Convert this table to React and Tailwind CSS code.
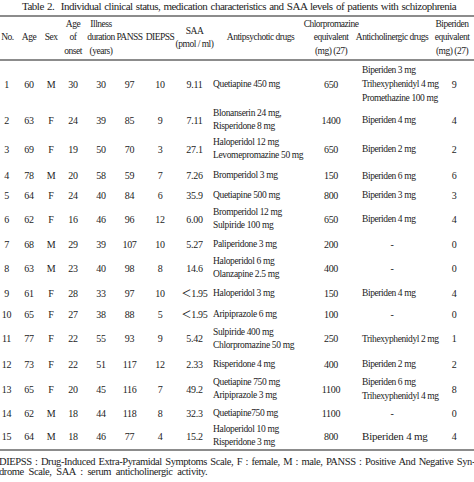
import React from "react";

const ROWS = [
  { no: "1", age: "60", sex: "M", onset: "30", dur: "30", panss: "97", diepss: "10", saa: "9.11", drugs: ["Quetiapine 450 mg"], cpz: "650", anti: ["Biperiden 3 mg", "Trihexyphenidyl 4 mg", "Promethazine 100 mg"], bip: "9", h: "h-[47px]" },
  { no: "2", age: "63", sex: "F", onset: "24", dur: "39", panss: "85", diepss: "9", saa: "7.11", drugs: ["Blonanserin 24 mg,", "Risperidone 8 mg"], cpz: "1400", anti: ["Biperiden 4 mg"], bip: "4", h: "h-[26px]" },
  { no: "3", age: "69", sex: "F", onset: "19", dur: "50", panss: "70", diepss: "3", saa: "27.1", drugs: ["Haloperidol 12 mg", "Levomepromazine 50 mg"], cpz: "650", anti: ["Biperiden 2 mg"], bip: "2", h: "h-[32px]" },
  { no: "4", age: "78", sex: "M", onset: "20", dur: "58", panss: "59", diepss: "7", saa: "7.26", drugs: ["Bromperidol 3 mg"], cpz: "150", anti: ["Biperiden 6 mg"], bip: "6", h: "h-[21px]" },
  { no: "5", age: "64", sex: "F", onset: "24", dur: "40", panss: "84", diepss: "6", saa: "35.9", drugs: ["Quetiapine 500 mg"], cpz: "800", anti: ["Biperiden 3 mg"], bip: "3", h: "h-[18px]" },
  { no: "6", age: "62", sex: "F", onset: "16", dur: "46", panss: "96", diepss: "12", saa: "6.00", drugs: ["Bromperidol 12 mg", "Sulpiride 100 mg"], cpz: "650", anti: ["Biperiden 4 mg"], bip: "4", h: "h-[30px]" },
  { no: "7", age: "68", sex: "M", onset: "29", dur: "39", panss: "107", diepss: "10", saa: "5.27", drugs: ["Paliperidone 3 mg"], cpz: "200", anti: null, bip: "0", h: "h-[20px]" },
  { no: "8", age: "63", sex: "M", onset: "23", dur: "40", panss: "98", diepss: "8", saa: "14.6", drugs: ["Haloperidol 6 mg", "Olanzapine 2.5 mg"], cpz: "400", anti: null, bip: "0", h: "h-[28px]" },
  { no: "9", age: "61", sex: "F", onset: "28", dur: "33", panss: "97", diepss: "10", saa: "＜1.95", drugs: ["Haloperidol 3 mg"], cpz: "150", anti: ["Biperiden 4 mg"], bip: "4", h: "h-[22px]" },
  { no: "10", age: "65", sex: "F", onset: "27", dur: "38", panss: "88", diepss: "5", saa: "＜1.95", drugs: ["Aripiprazole 6 mg"], cpz: "100", anti: null, bip: "0", h: "h-[20px]" },
  { no: "11", age: "77", sex: "F", onset: "22", dur: "55", panss: "93", diepss: "9", saa: "5.42", drugs: ["Sulpiride 400 mg", "Chlorpromazine 50 mg"], cpz: "250", anti: ["Trihexyphenidyl 2 mg"], bip: "1", h: "h-[29px]" },
  { no: "12", age: "73", sex: "F", onset: "22", dur: "51", panss: "117", diepss: "12", saa: "2.33", drugs: ["Risperidone 4 mg"], cpz: "400", anti: ["Biperiden 2 mg"], bip: "2", h: "h-[22px]" },
  { no: "13", age: "65", sex: "F", onset: "20", dur: "45", panss: "116", diepss: "7", saa: "49.2", drugs: ["Quetiapine 750 mg", "Aripiprazole 3 mg"], cpz: "1100", anti: ["Biperiden 6 mg", "Trihexyphenidyl 4 mg"], bip: "8", h: "h-[28px]" },
  { no: "14", age: "62", sex: "M", onset: "18", dur: "44", panss: "118", diepss: "8", saa: "32.3", drugs: ["Quetiapine750 mg"], cpz: "1100", anti: null, bip: "0", h: "h-[20px]" },
  { no: "15", age: "64", sex: "M", onset: "18", dur: "46", panss: "77", diepss: "4", saa: "15.2", drugs: ["Haloperidol 10 mg", "Risperidone 3 mg"], cpz: "800", anti: ["Biperiden 4 mg"], bip: "4", h: "h-[25px]", bigAnti: true },
];

const HEAD = [
  ["No."], ["Age"], ["Sex"], ["Age", "of", "onset"], ["Illness", "duration", "(years)"],
  ["PANSS"], ["DIEPSS"], ["SAA", "(pmol / ml)"], ["Antipsychotic drugs"],
  ["Chlorpromazine", "equivalent", "(mg)  (27)"], ["Anticholinergic drugs"],
  ["Biperiden", "equivalent", "(mg)  (27)"],
];

function Lines({ items, cls }) {
  return (
    <div className={cls}>
      {items.map((t) => <div key={t} className="whitespace-nowrap">{t}</div>)}
    </div>
  );
}

export default function App() {
  return (
    <div className="w-[474px] h-[482px] overflow-hidden bg-white text-[#1c1c1c] font-['Liberation_Serif','Noto_Sans_CJK_KR',serif]">
      <div className="h-[15px] pl-[22px] text-[11px] leading-[12px] whitespace-nowrap tracking-[-0.5px] [word-spacing:1px]">
        Table 2.&nbsp; Individual clinical status, medication characteristics and SAA levels of patients with schizophrenia
      </div>

      <table className="w-[474px] table-fixed border-collapse">
        <colgroup>
          <col className="w-[15px]" />
          <col className="w-[28px]" />
          <col className="w-[16px]" />
          <col className="w-[28px]" />
          <col className="w-[28px]" />
          <col className="w-[29px]" />
          <col className="w-[32px]" />
          <col className="w-[37px]" />
          <col className="w-[95px]" />
          <col className="w-[46px]" />
          <col className="w-[76px]" />
          <col className="w-[44px]" />
        </colgroup>
        <thead>
          <tr className="h-[44px] border-t-2 border-b-2 border-[#8c8c8c]">
            {HEAD.map((h, i) => (
              <th key={i} className="p-0 font-normal text-center align-middle text-[9.5px] leading-[13.5px] tracking-[-0.5px]">
                <Lines items={h} cls="flex flex-col items-center" />
              </th>
            ))}
          </tr>
        </thead>
        <tbody className="text-[10px] tracking-[-0.3px]">
          {ROWS.map((r) => (
            <tr key={r.no} className={r.h}>
              <td className="p-0 pr-0.5 text-center align-middle">{r.no}</td>
              <td className="p-0 text-center align-middle">{r.age}</td>
              <td className="p-0 text-center align-middle">{r.sex}</td>
              <td className="p-0 text-center align-middle">{r.onset}</td>
              <td className="p-0 text-center align-middle">{r.dur}</td>
              <td className="p-0 text-center align-middle">{r.panss}</td>
              <td className="p-0 text-center align-middle">{r.diepss}</td>
              <td className="p-0 text-center align-middle whitespace-nowrap">{r.saa}</td>
              <td className="p-0 align-middle">
                <Lines items={r.drugs} cls="text-[9.5px] leading-[13px] tracking-[-0.35px]" />
              </td>
              <td className="p-0 text-center align-middle">{r.cpz}</td>
              <td className="p-0 pl-2 align-middle">
                {r.anti ? (
                  <Lines
                    items={r.anti}
                    cls={r.bigAnti ? "text-[11px] leading-[13px] tracking-[-0.2px]" : "text-[9.5px] leading-[14px] tracking-[-0.4px]"}
                  />
                ) : (
                  <div className="pr-2 text-center">-</div>
                )}
              </td>
              <td className="p-0 text-center align-middle pl-1">{r.bip}</td>
            </tr>
          ))}
        </tbody>
        <tfoot>
          <tr className="h-0 border-t-2 border-[#8c8c8c]"><td colSpan={12} className="p-0" /></tr>
        </tfoot>
      </table>

      <div className="mt-1.5 -ml-px w-[476px] text-[10.5px] leading-[10px] tracking-[-0.4px]">
        <div className="text-justify [text-align-last:justify]">
          DIEPSS : Drug-Induced Extra-Pyramidal Symptoms Scale, F : female, M : male, PANSS : Positive And Negative Syn-
        </div>
        <div className="[word-spacing:2.5px]">drome Scale, SAA : serum anticholinergic activity.</div>
      </div>
    </div>
  );
}
